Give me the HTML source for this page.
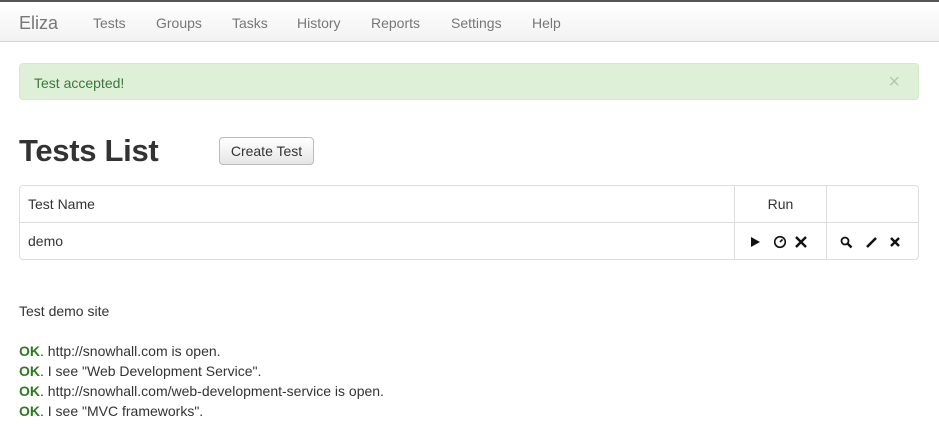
<!DOCTYPE html>
<html><head><style>
body{margin:0;width:939px;height:445px;overflow:hidden;background:#fff;font-family:"Liberation Sans",sans-serif;font-size:14px;color:#333;position:relative}
.nav{position:absolute;left:0;top:0;width:939px;height:42px;background:linear-gradient(#fff,#f2f2f2);border-top:2px solid #555;border-bottom:1px solid #d4d4d4;box-sizing:border-box}
.nav span{position:absolute;top:13px;color:#777;font-size:14px}
.brand{font-size:18px!important;top:11px!important}
.alert{position:absolute;left:19px;top:63px;width:900px;height:37px;background:#dff0d8;border:1px solid #d6e9c6;border-radius:4px;box-sizing:border-box;color:#3c763d;padding:11px 14px}
.alert b{position:absolute;right:18px;top:7px;font-size:20px;color:#b5c9ad;font-weight:normal}
h1{position:absolute;left:19px;top:133px;margin:0;font-size:31px;letter-spacing:-0.3px;font-weight:bold;color:#333}
.btn{position:absolute;left:219px;top:137px;width:95px;height:28px;box-sizing:border-box;border:1px solid #bbb;border-radius:4px;background:linear-gradient(#fff,#e6e6e6);text-align:center;line-height:26px;color:#333}
table{position:absolute;left:19px;top:185px;width:900px;border-collapse:separate;border-spacing:0;border:1px solid #ddd;border-radius:4px}
td{height:37px;padding:0 8px;border-top:1px solid #ddd;box-sizing:border-box}
tr:first-child td{border-top:none;height:36px}
td+td{border-left:1px solid #ddd}
.t{position:absolute;left:19px}
.ok{color:#2d7a1e;font-weight:bold}
svg{vertical-align:middle}
</style></head><body>
<div class="nav"><span class="brand" style="left:19px">Eliza</span><span style="left:93px">Tests</span><span style="left:156px">Groups</span><span style="left:232px">Tasks</span><span style="left:297px">History</span><span style="left:371px">Reports</span><span style="left:451px">Settings</span><span style="left:532px">Help</span></div>
<div class="alert">Test accepted!<b>×</b></div>
<h1>Tests List</h1>
<div class="btn">Create Test</div>
<table>
<tr><td style="width:714px">Test Name</td><td style="width:92px;text-align:center">Run</td><td></td></tr>
<tr><td>demo</td><td style="text-align:center;padding:0 4px 0 0">
<svg width="12" height="12" viewBox="0 0 12 12"><path d="M2 1L11 6L2 11Z" fill="#111"/></svg>
<svg width="14" height="14" viewBox="0 0 14 14" style="margin-left:8px"><circle cx="7" cy="7" r="5.3" fill="none" stroke="#111" stroke-width="1.6"/><path d="M7 7L9.5 4.5" stroke="#111" stroke-width="1.6"/></svg>
<svg width="14" height="14" viewBox="0 0 14 14" style="margin-left:4px"><path d="M2 12L12 2M2 2L12 12" stroke="#111" stroke-width="2.4"/></svg>
</td><td style="text-align:center;padding:0 4px 0 0">
<svg width="13" height="13" viewBox="0 0 13 13"><circle cx="5" cy="5" r="3.5" fill="none" stroke="#111" stroke-width="1.8"/><path d="M7.5 7.5L11.5 11.5" stroke="#111" stroke-width="2.4"/></svg>
<svg width="13" height="13" viewBox="0 0 13 13" style="margin-left:8px"><path d="M2 11L11 2" stroke="#111" stroke-width="2.6"/></svg>
<svg width="12" height="12" viewBox="0 0 12 12" style="margin-left:8px"><path d="M2 2L10 10M10 2L2 10" stroke="#111" stroke-width="2.4"/></svg>
</td></tr>
</table>
<div class="t" style="top:303px">Test demo site</div>
<div class="t" style="top:343px"><span class="ok">OK</span>. http://snowhall.com is open.</div>
<div class="t" style="top:363px"><span class="ok">OK</span>. I see "Web Development Service".</div>
<div class="t" style="top:383px"><span class="ok">OK</span>. http://snowhall.com/web-development-service is open.</div>
<div class="t" style="top:403px"><span class="ok">OK</span>. I see "MVC frameworks".</div>
</body></html>
